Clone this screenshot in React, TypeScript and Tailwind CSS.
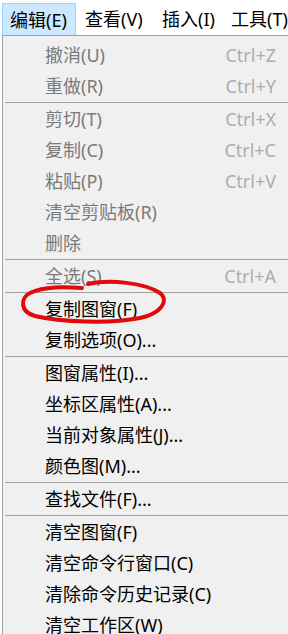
import React from 'react';

type Item =
  | { type: 'sep' }
  | { type: 'item'; label: string; shortcut?: string; disabled?: boolean };

const items: Item[] = [
  { type: 'item', label: '撤消(U)', shortcut: 'Ctrl+Z', disabled: true },
  { type: 'item', label: '重做(R)', shortcut: 'Ctrl+Y', disabled: true },
  { type: 'sep' },
  { type: 'item', label: '剪切(T)', shortcut: 'Ctrl+X', disabled: true },
  { type: 'item', label: '复制(C)', shortcut: 'Ctrl+C', disabled: true },
  { type: 'item', label: '粘贴(P)', shortcut: 'Ctrl+V', disabled: true },
  { type: 'item', label: '清空剪贴板(R)', disabled: true },
  { type: 'item', label: '删除', disabled: true },
  { type: 'sep' },
  { type: 'item', label: '全选(S)', shortcut: 'Ctrl+A', disabled: true },
  { type: 'sep' },
  { type: 'item', label: '复制图窗(F)' },
  { type: 'item', label: '复制选项(O)...' },
  { type: 'sep' },
  { type: 'item', label: '图窗属性(I)...' },
  { type: 'item', label: '坐标区属性(A)...' },
  { type: 'item', label: '当前对象属性(J)...' },
  { type: 'item', label: '颜色图(M)...' },
  { type: 'sep' },
  { type: 'item', label: '查找文件(F)...' },
  { type: 'sep' },
  { type: 'item', label: '清空图窗(F)' },
  { type: 'item', label: '清空命令行窗口(C)' },
  { type: 'item', label: '清除命令历史记录(C)' },
  { type: 'item', label: '清空工作区(W)' },
];

export default function App() {
  return (
    <div className="relative w-[288px] h-[634px] overflow-hidden bg-white font-['Noto_Sans','Noto_Sans_CJK_SC',sans-serif] text-[18px] text-black">
      {/* Menu bar */}
      <div className="flex h-[35px] items-end whitespace-nowrap">
        <div className="ml-[2px] flex h-[32px] w-[74px] shrink-0 items-center border border-b-0 border-[#99d1ff] bg-[#cce8ff] pl-[7px] leading-none">
          编辑(E)
        </div>
        <div className="flex h-[32px] w-[77px] shrink-0 items-center pl-[9px] leading-none">查看(V)</div>
        <div className="flex h-[32px] w-[69px] shrink-0 items-center pl-[9px] leading-none">插入(I)</div>
        <div className="flex h-[32px] w-[80px] shrink-0 items-center pl-[9px] leading-none">工具(T)</div>
      </div>

      {/* Dropdown */}
      <div className="ml-[2px] w-[300px] border border-[#a0a0a0] bg-[#f0f0f0] pt-[3px]">
        {items.map((it, i) =>
          it.type === 'sep' ? (
            <div key={i} className="flex h-[2px] items-center">
              <div className="ml-[2px] h-px w-[283px] bg-[#a0a0a0]" />
            </div>
          ) : (
            <div key={i} className="flex h-[31px] items-center pl-[42px] pr-[25px] leading-none">
              <span className={'flex-1 whitespace-nowrap ' + (it.disabled ? 'text-[#7a7a7a]' : 'text-black')}>
                {it.label}
              </span>
              {it.shortcut && (
                <span className={it.disabled ? 'text-[#adadad]' : 'text-black'}>{it.shortcut}</span>
              )}
            </div>
          )
        )}
      </div>

      {/* Hand-drawn red mark */}
      <svg className="pointer-events-none absolute left-0 top-0" width="288" height="634" viewBox="0 0 288 634">
        <path
          d="M 88 284 C 110 279, 145 283, 160 293 C 170 301, 160 314, 140 318 C 110 324, 60 322, 35 316 C 20 312, 20 298, 30 293 C 45 286, 65 287, 82 288"
          fill="none"
          stroke="#e00a0a"
          strokeWidth="4"
          strokeLinecap="round"
        />
      </svg>
    </div>
  );
}
